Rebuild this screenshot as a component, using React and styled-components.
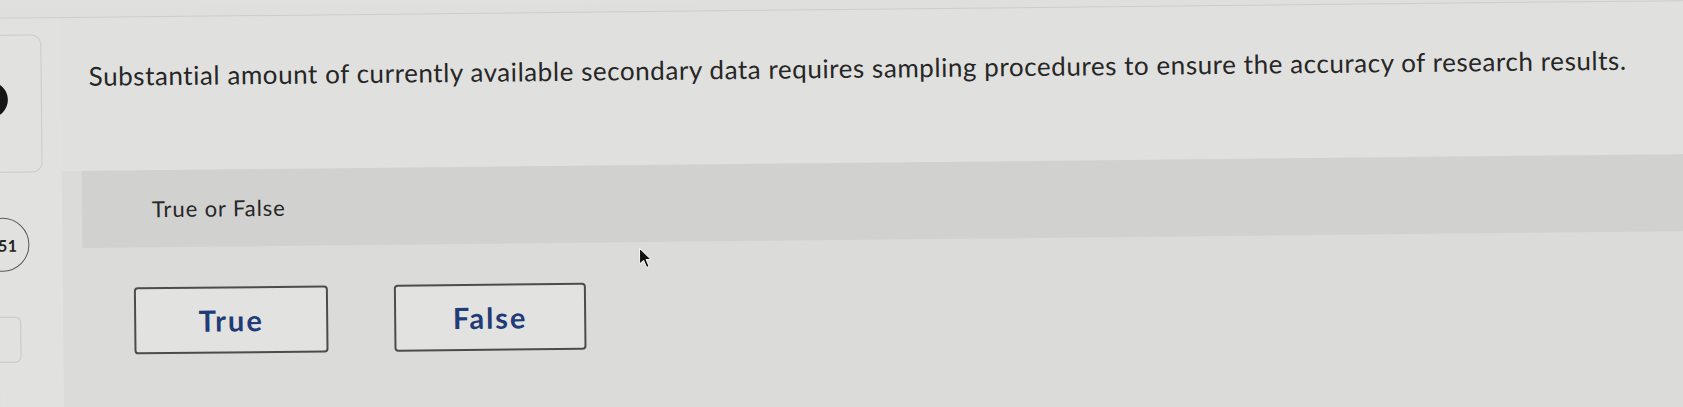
import React from "react";
import styled, { createGlobalStyle } from "styled-components";

const Global = createGlobalStyle`
  html, body {
    margin: 0;
    padding: 0;
    background: #e0e0de;
    overflow: hidden;
  }
  #root {
    width: 1683px;
    height: 407px;
    overflow: hidden;
  }
`;

const Viewport = styled.div`
  width: 1683px;
  height: 407px;
  overflow: hidden;
  background: #e0e0de;
  font-family: "Lato", "Noto Sans", sans-serif;
`;

const Page = styled.div`
  width: 1683px;
  height: 460px;
  display: flex;
  flex-direction: column;
  transform: rotate(-0.6deg);
  transform-origin: 841px 203px;
`;

const TopStrip = styled.div`
  flex: none;
  height: 9px;
  margin: 0 -40px;
  background: #dfdfdd;
  border-bottom: 1px solid #cdcdcb;
`;

const Body = styled.div`
  flex: 1;
  display: grid;
  grid-template-columns: 62px 1fr;
`;

const Sidebar = styled.aside`
  display: flex;
  flex-direction: column;
  align-items: flex-start;
  padding-top: 16px;
  background: #e1e1df;
`;

const NavCard = styled.div`
  box-sizing: border-box;
  width: 83px;
  height: 138px;
  margin-left: -40px;
  padding: 46px 0 0 12px;
  border: 1.5px solid #cbcbc9;
  border-radius: 10px;
`;

const Dot = styled.div`
  width: 36px;
  height: 36px;
  border-radius: 50%;
  background: #151515;
`;

const NumberBadge = styled.div`
  box-sizing: border-box;
  width: 54px;
  height: 54px;
  margin: 45px 0 0 -25px;
  border: 1.5px solid #5a5a5a;
  border-radius: 50%;
  display: flex;
  align-items: center;
  justify-content: flex-end;
  padding-right: 11px;
  font-weight: 700;
  font-size: 16px;
  color: #222;
  letter-spacing: 0.5px;
`;

const SmallBox = styled.div`
  box-sizing: border-box;
  width: 50px;
  height: 46px;
  margin: 45px 0 0 -30px;
  border: 1.5px solid #c6c6c4;
  border-radius: 6px;
`;

const Main = styled.main`
  display: flex;
  flex-direction: column;
`;

const Question = styled.p`
  margin: 0;
  padding: 42px 0 0 28px;
  font-size: 26px;
  line-height: 32px;
  color: #262626;
  white-space: nowrap;
  letter-spacing: 0.56px;
`;

const Panel = styled.section`
  position: relative;
  flex: 1;
  margin-top: 79px;
  margin-right: -40px;
  background: #dbdbd9;
`;

const Band = styled.div`
  height: 77px;
  margin-left: 20px;
  padding-left: 70px;
  display: flex;
  align-items: center;
  background: #d1d1cf;
  font-size: 22px;
  color: #262626;
  letter-spacing: 0.9px;
`;

const Choices = styled.div`
  display: flex;
  gap: 66px;
  padding: 40px 0 0 71px;
`;

const Choice = styled.button`
  box-sizing: border-box;
  width: ${(p) => p.$w}px;
  height: 67px;
  background: #e2e2e0;
  border: 2px solid #4c4c4c;
  border-radius: 4px;
  font-family: "Lato", "Noto Sans", sans-serif;
  font-weight: 700;
  font-size: 29px;
  letter-spacing: 2px;
  color: #1f3b78;
  cursor: pointer;
`;

const Pointer = styled.svg`
  position: absolute;
  left: 576px;
  top: 82px;
  width: 14px;
  height: 22px;
`;

export default function App() {
  return (
    <>
      <Global />
      <Viewport>
        <Page>
          <TopStrip />
          <Body>
            <Sidebar>
              <NavCard>
                <Dot />
              </NavCard>
              <NumberBadge>51</NumberBadge>
              <SmallBox />
            </Sidebar>
            <Main>
              <Question>
                Substantial amount of currently available secondary data requires sampling procedures to ensure the accuracy of research results.
              </Question>
              <Panel>
                <Band>True or False</Band>
                <Choices>
                  <Choice $w={194}>True</Choice>
                  <Choice $w={192}>False</Choice>
                </Choices>
                <Pointer viewBox="0 0 14 22">
                  <path
                    d="M1 1 L1 17 L5 13.5 L8 20.5 L10.5 19.5 L7.6 12.5 L12.5 12.5 Z"
                    fill="#111"
                    stroke="#f4f4f4"
                    strokeWidth="1"
                    strokeLinejoin="round"
                  />
                </Pointer>
              </Panel>
            </Main>
          </Body>
        </Page>
      </Viewport>
    </>
  );
}
